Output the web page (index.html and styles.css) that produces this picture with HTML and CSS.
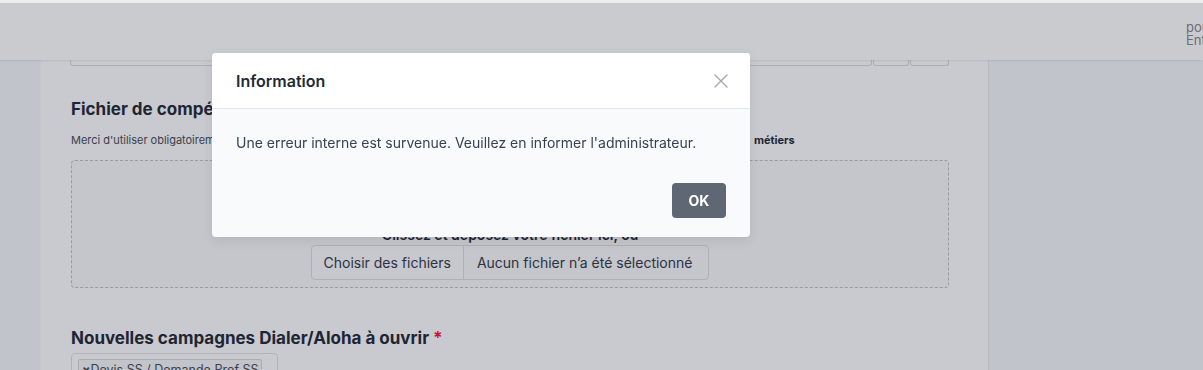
FILE: index.html
```html
<!DOCTYPE html>
<html lang="fr">
<head>
<meta charset="utf-8">
<title>Information</title>
<link rel="stylesheet" href="styles.css">
</head>
<body>
<div class="topstrip"></div>
<header class="header">
  <div class="user">
    <div class="user-name">pouzet.marie</div>
    <div class="user-role">Entreprise</div>
  </div>
</header>
<div class="layout">
  <aside class="side"></aside>
  <main class="card">
    <div class="input-group">
      <div class="ig-main"></div>
      <div class="ig-btn"></div>
      <div class="ig-btn ig-btn-last"></div>
    </div>
    <h2 class="heading h-first">Fichier de compétences <span class="req">*</span></h2>
    <p class="hint">Merci d'utiliser obligatoirement le fichier modèle pour y renseigner vos compétences, disponible ici : <b>Référentiel des compétences <span class="last">métiers</span></b></p>
    <div class="dropzone">
      <div class="dz-text">Glissez et déposez votre fichier ici, ou</div>
      <div class="file-input">
        <span class="fi-btn">Choisir des fichiers</span>
        <span class="fi-name">Aucun fichier n’a été sélectionné</span>
      </div>
    </div>
    <h2 class="heading h-second">Nouvelles campagnes Dialer/Aloha à ouvrir <span class="req">*</span></h2>
    <div class="select">
      <span class="chip"><span class="chip-x">×</span>Devis SS / Demande Prof SS</span>
    </div>
  </main>
  <div class="rest"></div>
</div>

<div class="modal" role="dialog">
  <div class="modal-header">
    <h3 class="modal-title">Information</h3>
    <button class="close" aria-label="Fermer">
      <svg width="14" height="14" viewBox="0 0 14 14"><path d="M1 1L13 13M13 1L1 13" stroke="#a3a8b1" stroke-width="1.4" fill="none" stroke-linecap="round"/></svg>
    </button>
  </div>
  <div class="modal-body">
    <p class="modal-text">Une erreur interne est survenue. Veuillez en informer l'administrateur.</p>
    <div class="modal-footer">
      <button class="btn-ok">OK</button>
    </div>
  </div>
</div>
</body>
</html>
```

FILE: styles.css
```css
* { box-sizing: border-box; }
html, body {
  margin: 0;
  padding: 0;
}
body {
  width: 1203px;
  height: 370px;
  overflow: hidden;
  background: #c1c4cb;
  font-family: Inter, "Noto Sans", sans-serif;
  color: #1e2533;
}
.topstrip {
  height: 3px;
  background: #eeeeef;
}
.header {
  height: 57px;
  background: #c9cbcf;
  box-shadow: 0 1px 2px rgba(0,0,0,0.08);
  position: relative;
  z-index: 2;
  display: flex;
  padding-left: 1186px;
  padding-top: 18px;
  white-space: nowrap;
  overflow: hidden;
}
.user {
  font-size: 13px;
  line-height: 13px;
  color: #6b6e76;
}
.layout {
  display: flex;
  height: 310px;
}
.side {
  width: 40px;
  flex: none;
  background: #c1c4cb;
}
.card {
  width: 949px;
  flex: none;
  background: #c8cacf;
  border-left: 1px solid #c3c6cb;
  border-right: 1px solid #b6b9bf;
  padding-left: 30px;
}
.rest {
  flex: 1;
  background: #c1c4cb;
}
.input-group {
  display: flex;
  height: 6px;
  width: 879px;
  margin-left: -1px;
}
.ig-main {
  width: 803px;
  border: 1px solid #abaeb4;
  border-top: none;
  border-radius: 0 0 3px 3px;
}
.ig-btn {
  width: 36px;
  margin-left: 1px;
  border: 1px solid #abaeb4;
  border-top: none;
  border-radius: 0 0 3px 3px;
}
.ig-btn-last { width: 39px; }
.heading {
  margin: 0;
  font-size: 17px;
  line-height: 24px;
  font-weight: 700;
  color: #1e2533;
}
.h-first { margin-top: 31px; }
.req { color: #c8102e; font-weight: 600; }
.hint {
  margin: 11px 0 0;
  font-size: 11px;
  line-height: 16px;
  color: #3b404e;
  white-space: nowrap;
  letter-spacing: -0.02px;
}
.hint b { color: #1e2533; font-weight: 700; }
.hint .last { padding-left: 2px; }
.dropzone {
  margin-top: 12px;
  width: 878px;
  height: 128px;
  border: 1px dashed #989ba2;
  border-radius: 4px;
  background: #c4c6cb;
  display: flex;
  flex-direction: column;
  align-items: center;
  justify-content: flex-end;
  padding-bottom: 7px;
}
.dz-text {
  font-size: 14px;
  font-weight: 600;
  line-height: 18px;
  color: #1e2533;
}
.file-input {
  display: flex;
  height: 35px;
  margin-top: 1px;
  border: 1px solid #adb0b6;
  border-radius: 4px;
  font-size: 14px;
  color: #2d3241;
  align-items: stretch;
}
.fi-btn {
  display: flex;
  align-items: center;
  padding: 0 12px;
  border-right: 1px solid #adb0b6;
  background: #c6c8cd;
  border-radius: 4px 0 0 4px;
}
.fi-name {
  display: flex;
  align-items: center;
  padding: 0 16px 0 13px;
}
.h-second { margin-top: 38px; }
.select {
  margin-top: 3px;
  width: 207px;
  height: 30px;
  border: 1px solid #b0b3b9;
  border-radius: 4px;
  padding: 4px 6px;
}
.chip {
  display: inline-block;
  height: 22px;
  padding: 0 2px 0 3px;
  border: 1px solid #a9acb2;
  border-radius: 2px;
  background: #c2c4c9;
  font-size: 12.5px;
  line-height: 20px;
  color: #3a3f4d;
  white-space: nowrap;
}
.chip-x { font-weight: 700; }

.modal {
  position: fixed;
  left: 212px;
  top: 53px;
  width: 538px;
  height: 184px;
  background: #f9fafb;
  border-radius: 4px;
  box-shadow: 0 4px 12px rgba(0,0,0,0.08);
  overflow: hidden;
  z-index: 10;
}
.modal-header {
  height: 56px;
  background: #ffffff;
  border-bottom: 1px solid #e3e5e9;
  display: flex;
  align-items: center;
  justify-content: space-between;
  padding: 0 22px 0 24px;
}
.modal-title {
  margin: 0;
  font-size: 16px;
  font-weight: 600;
  color: #1f2937;
}
.close {
  border: none;
  background: none;
  padding: 0;
  width: 14px;
  height: 14px;
  display: flex;
}
.modal-body {
  padding: 24px 24px 0;
}
.modal-text {
  margin: 0;
  font-size: 14px;
  line-height: 20px;
  color: #374151;
}
.modal-footer {
  display: flex;
  justify-content: flex-end;
  margin-top: 30px;
}
.btn-ok {
  width: 54px;
  height: 35px;
  border: none;
  border-radius: 4px;
  background: #5f6674;
  color: #ffffff;
  font-family: Inter, "Noto Sans", sans-serif;
  font-size: 14px;
  font-weight: 700;
}
```
